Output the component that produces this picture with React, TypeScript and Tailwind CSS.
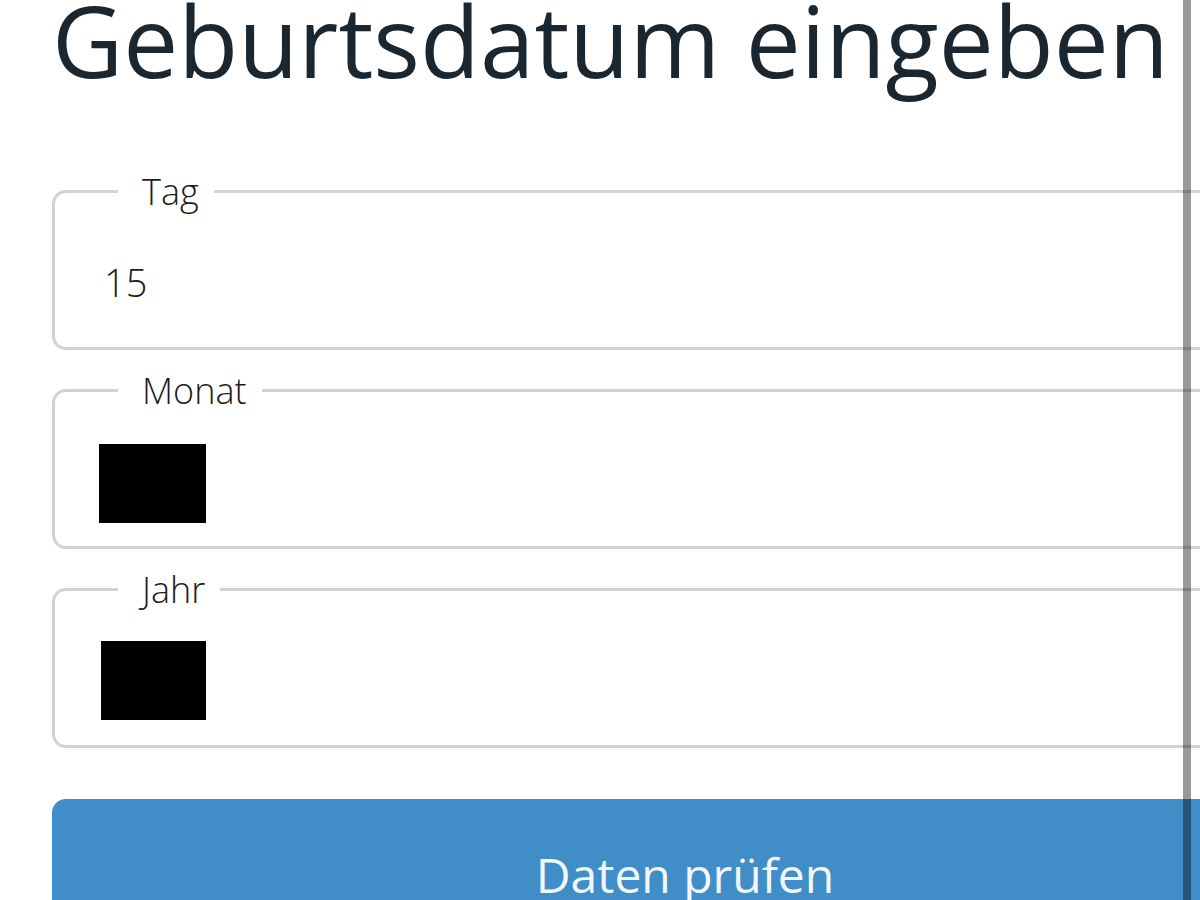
import React from "react";

function Field({ label, children, top }: { label: string; children: React.ReactNode; top: string }) {
  return (
    <fieldset className="m-0 p-0 border-[3px] border-[#d2d2d2] rounded-[14px] w-[1266px] min-w-0">
      <legend className="ml-[63px] pl-[24px] pr-[15px] text-[36px] leading-[43px] font-light text-[#1c1c1c]">{label}</legend>
      <div className={`h-[134px] pl-[44px] ${top}`}>{children}</div>
    </fieldset>
  );
}

export default function App() {
  return (
    <div
      className="relative w-[1200px] h-[900px] overflow-hidden bg-white"
      style={{ fontFamily: '"Open Sans", "Noto Sans", sans-serif' }}
    >
      <div className="pl-[52px] flex flex-col">
        <h1 className="mt-[-9px] text-[98px] leading-[1] font-normal text-[#1a2630] whitespace-nowrap">
          Geburtsdatum eingeben
        </h1>
        <div className="mt-[81px] flex flex-col gap-[19px]">
          <Field label="Tag" top="pt-[50px]">
            <div className="text-[38px] leading-[1] font-light text-[#1c1c1c] pl-[5px]">15</div>
          </Field>
          <Field label="Monat" top="pt-[32px]">
            <div className="w-[107px] h-[79px] bg-black"></div>
          </Field>
          <Field label="Jahr" top="pt-[30px]">
            <div className="ml-[2px] w-[105px] h-[79px] bg-black"></div>
          </Field>
        </div>
        <button className="mt-[51px] w-[1266px] h-[160px] rounded-[14px] bg-[#418dc8] text-[#f2f7fb] text-[48px] leading-[1] font-normal pb-[8px]">
          Daten prüfen
        </button>
      </div>
      <div className="absolute top-0 left-[1183px] w-[8px] h-[900px] bg-black/40"></div>
    </div>
  );
}
